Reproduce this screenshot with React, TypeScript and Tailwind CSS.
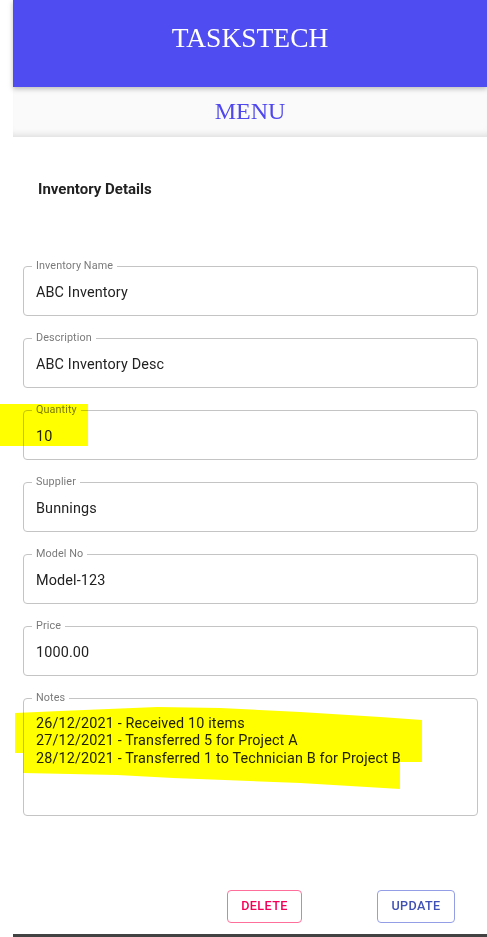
import React from "react";

const fields: { label: string; value: string }[] = [
  { label: "Inventory Name", value: "ABC Inventory" },
  { label: "Description", value: "ABC Inventory Desc" },
  { label: "Quantity", value: "10" },
  { label: "Supplier", value: "Bunnings" },
  { label: "Model No", value: "Model-123" },
  { label: "Price", value: "1000.00" },
];

const notes = [
  "26/12/2021 - Received 10 items",
  "27/12/2021 - Transferred 5 for Project A",
  "28/12/2021 - Transferred 1 to Technician B for Project B",
];

function Field({ label, value }: { label: string; value: string }) {
  return (
    <div className="relative h-[50px] rounded-[4px] border border-[#c4c4c4]">
      <span className="absolute left-[8px] top-[-8px] bg-white px-[4px] text-[10.8px] leading-[14px] tracking-[0.1px] text-[#7a7a7a]">
        {label}
      </span>
      <div className="flex h-full items-center pl-[12px] pt-[3px] text-[14.4px] tracking-[0.135px] text-[#222222]">
        {value}
      </div>
    </div>
  );
}

export default function App() {
  return (
    <div
      className="relative h-[937px] w-[487px] overflow-hidden bg-white"
      style={{ fontFamily: "Roboto, 'Liberation Sans', sans-serif" }}
    >
      <div className="ml-[13px] flex flex-col">
        <div className="relative z-10 flex h-[87px] items-center justify-center bg-[#4f4cf1] pb-[11px] shadow-[0_2px_5px_rgba(0,0,0,0.25)]">
          <span
            className="text-[27.5px] leading-none text-white"
            style={{ fontFamily: "'Liberation Serif', 'Times New Roman', serif" }}
          >
            TASKSTECH
          </span>
        </div>
        <div className="flex h-[50px] items-center justify-center bg-[#fafafa] pb-[2px] shadow-[inset_0_-7px_7px_-5px_rgba(0,0,0,0.12)]">
          <span
            className="text-[24px] leading-none text-[#5048ee]"
            style={{ fontFamily: "'Liberation Serif', 'Times New Roman', serif" }}
          >
            MENU
          </span>
        </div>

        <div className="pt-[42px]">
          <div className="pl-[25px] text-[15px] font-bold leading-[20px] text-[#222222]">Inventory Details</div>
        </div>

        <div className="mt-[67px] flex flex-col gap-[22px] pl-[10px] pr-[9px]">
          {fields.map((f) => (
            <Field key={f.label} label={f.label} value={f.value} />
          ))}
          <div className="relative h-[118px] rounded-[4px] border border-[#c4c4c4]">
            <span className="absolute left-[8px] top-[-8px] bg-white px-[4px] text-[10.8px] leading-[14px] tracking-[0.1px] text-[#7a7a7a]">
              Notes
            </span>
            <div className="pl-[12px] pt-[16px] text-[14.4px] leading-[17.3px] tracking-[0.135px] text-[#222222]">
              {notes.map((n) => (
                <div key={n}>{n}</div>
              ))}
            </div>
          </div>
        </div>

        <div className="mt-[74px] flex justify-end gap-[75px] pr-[32px]">
          <button className="flex h-[33px] w-[75px] items-center justify-center rounded-[4px] border border-[#ff6f9c] text-[12.6px] font-medium tracking-[0.4px] text-[#f50057]">
            DELETE
          </button>
          <button className="flex h-[33px] w-[78px] items-center justify-center rounded-[4px] border border-[#939ee6] text-[12.6px] font-medium tracking-[0.4px] text-[#3f51b5]">
            UPDATE
          </button>
        </div>

        <div className="mt-[11px] h-[3px] bg-[#424242]" />
      </div>

      <svg
        className="pointer-events-none absolute left-0 top-0 mix-blend-multiply"
        width="487"
        height="937"
        viewBox="0 0 487 937"
      >
        <rect x="0" y="404" width="88" height="42" fill="#ffff00" />
        <polygon
          fill="#ffff00"
          points="15,713 60,711 157,707 220,708 300,712 380,717 422,720 422,762 400,762 400,789 300,783 173,778 117,775 23,773 23,753 15,753"
        />
      </svg>
    </div>
  );
}
